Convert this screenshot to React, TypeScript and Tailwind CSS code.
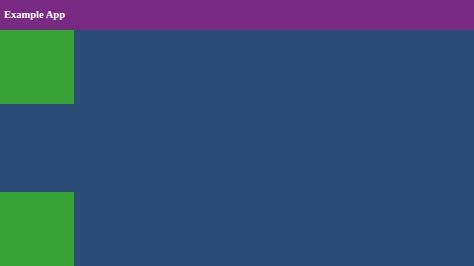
import React from "react";

export default function App() {
  return (
    <div className="flex h-screen w-full flex-col bg-[#2c4c78]">
      {/* header */}
      <div className="flex h-[30px] shrink-0 items-center bg-[#782a82] px-[4px]">
        <span className="text-[10.5px] font-bold leading-none text-white [font-family:'Liberation_Serif',serif]">
          Example App
        </span>
      </div>
      {/* body */}
      <div className="flex flex-1 flex-col justify-between">
        <div className="h-[74px] w-[74px] bg-[#36a336]" />
        <div className="h-[74px] w-[74px] bg-[#36a336]" />
      </div>
    </div>
  );
}
